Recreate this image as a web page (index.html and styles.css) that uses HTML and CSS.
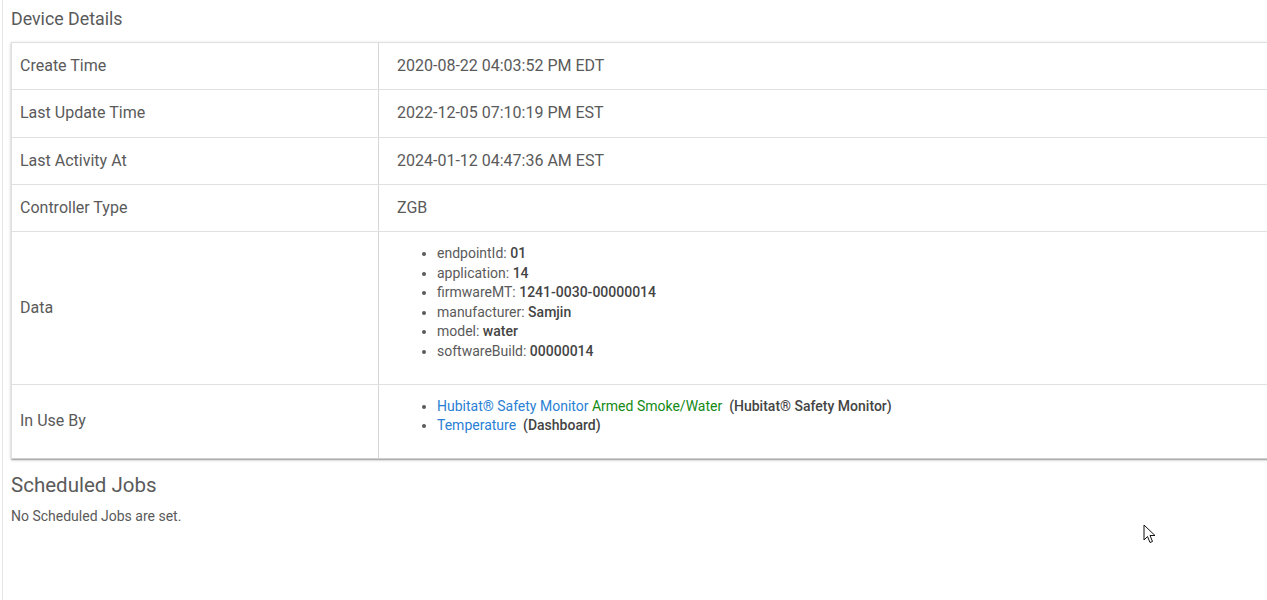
FILE: index.html
```
<!DOCTYPE html>
<html>
<head>
<meta charset="utf-8">
<link rel="stylesheet" href="styles.css">
</head>
<body>
<div class="page">
  <div class="content">
    <h2 class="section-title">Device Details</h2>
    <div class="card">
      <table class="details">
        <tr><td class="key">Create Time</td><td class="val">2020-08-22 04:03:52 PM EDT</td></tr>
        <tr><td class="key">Last Update Time</td><td class="val">2022-12-05 07:10:19 PM EST</td></tr>
        <tr><td class="key">Last Activity At</td><td class="val">2024-01-12 04:47:36 AM EST</td></tr>
        <tr><td class="key">Controller Type</td><td class="val">ZGB</td></tr>
        <tr><td class="key">Data</td><td class="val list-cell">
          <ul class="items">
            <li>endpointId: <b>01</b></li>
            <li>application: <b>14</b></li>
            <li>firmwareMT: <b>1241-0030-00000014</b></li>
            <li>manufacturer: <b>Samjin</b></li>
            <li>model: <b>water</b></li>
            <li>softwareBuild: <b>00000014</b></li>
          </ul>
        </td></tr>
        <tr><td class="key">In Use By</td><td class="val list-cell">
          <ul class="items">
            <li><a class="link">Hubitat® Safety Monitor</a> <span class="green">Armed Smoke/Water</span> &nbsp;<b>(Hubitat® Safety Monitor)</b></li>
            <li><a class="link">Temperature</a> &nbsp;<b>(Dashboard)</b></li>
          </ul>
        </td></tr>
      </table>
    </div>
    <h2 class="jobs-title">Scheduled Jobs</h2>
    <p class="jobs-text">No Scheduled Jobs are set.</p>
  </div>
  <svg class="cursor" width="14" height="21" viewBox="0 0 14 21"><path d="M1 1 L1 16 L4.5 12.5 L7 18.5 L9.5 17.5 L7 11.5 L12 11.5 Z" fill="#fff" stroke="#111" stroke-width="1" stroke-linejoin="miter"/></svg>
</div>
</body>
</html>
```
FILE: styles.css
```
html, body {
  margin: 0;
  padding: 0;
  background: #fff;
  overflow: hidden;
}
body {
  font-family: Roboto, "Liberation Sans", sans-serif;
  color: #5a5a5a;
  width: 1267px;
  height: 600px;
}
.page {
  position: relative;
  height: 600px;
  border-left: 1px solid #e6e6e6;
  margin-left: 2px;
}
.content {
  padding-left: 8px;
  width: 1300px;
}
.section-title {
  margin: 0;
  padding-top: 7px;
  font-size: 17.8px;
  font-weight: 400;
  line-height: 24px;
  height: 35px;
  color: #5a5a5a;
}
.card {
  box-shadow: 0 1px 3px rgba(0,0,0,0.22), 0 1px 1px rgba(0,0,0,0.12), 0 2px 1px -1px rgba(0,0,0,0.1);
  border: 1px solid #e0e0e0;
  border-bottom-color: #cfcfcf;
  background: #fff;
}
.details {
  width: 100%;
  border-collapse: collapse;
}
.details td {
  border-bottom: 1px solid #e0e0e0;
  font-size: 16px;
  line-height: 22.25px;
  padding: 12px 8px;
  vertical-align: middle;
}
.details tr:last-child td {
  border-bottom: none;
}
.key {
  width: 350px;
  border-right: 1px solid #d6d6d6;
}
.val {
  padding-left: 18px !important;
}
.list-cell {
  padding-top: 12px !important;
  padding-bottom: 22px !important;
}
.items {
  margin: 0;
  padding-left: 40px;
  font-size: 14px;
  line-height: 19.6px;
}
.items b {
  font-weight: 500;
  color: #444;
}
.link {
  color: #2a7fd4;
  text-decoration: none;
}
.green {
  color: #138a13;
}
.jobs-title {
  margin: 0;
  padding-top: 13px;
  font-size: 20.5px;
  font-weight: 400;
  line-height: 26px;
  color: #5a5a5a;
}
.jobs-text {
  margin: 8px 0 0 0;
  font-size: 14px;
  line-height: 20px;
  color: #5a5a5a;
}
.cursor {
  position: absolute;
  left: 1140px;
  top: 524px;
}
```
